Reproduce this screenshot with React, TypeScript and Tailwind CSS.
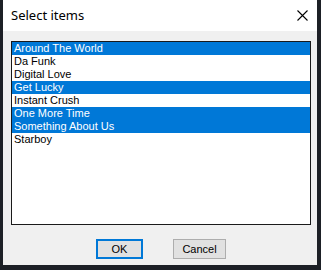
const items = [
  { name: "Around The World", selected: true },
  { name: "Da Funk", selected: false },
  { name: "Digital Love", selected: false },
  { name: "Get Lucky", selected: true },
  { name: "Instant Crush", selected: false },
  { name: "One More Time", selected: true },
  { name: "Something About Us", selected: true },
  { name: "Starboy", selected: false },
];

export default function App() {
  return (
    <div className="w-[321px] h-[270px] bg-[#1d2026] pl-[3px] overflow-hidden">
      <div className="w-[314px] h-[265px] flex flex-col bg-[#f0f0f0]">
        {/* Title bar */}
        <div className="h-[31px] bg-white flex items-center justify-between pl-[8px] pr-[9px]">
          <span className="text-[13px] text-black font-['Noto_Sans',sans-serif]">Select items</span>
          <svg width="11" height="11" viewBox="0 0 11 11" className="text-black">
            <path d="M0.5 0.5 L10.5 10.5 M10.5 0.5 L0.5 10.5" stroke="currentColor" strokeWidth="1.1" fill="none" />
          </svg>
        </div>

        {/* List */}
        <div className="pt-[10px] pl-[8px]">
          <div className="w-[300px] h-[184px] border border-[#1a1a1a] bg-white font-['Liberation_Sans',sans-serif] text-[11px]">
            {items.map((it) => (
              <div
                key={it.name}
                className={
                  it.selected
                    ? "h-[13px] leading-[13px] pl-[2px] bg-[#0078d7] text-white"
                    : "h-[13px] leading-[13px] pl-[2px] text-black"
                }
              >
                {it.name}
              </div>
            ))}
          </div>
        </div>

        {/* Buttons */}
        <div className="flex pl-[93px] pt-[14px] gap-[30px] font-['Liberation_Sans',sans-serif] text-[11px] text-black">
          <button className="w-[47px] h-[20px] bg-[#e1e1e1] border-2 border-[#0078d7]">OK</button>
          <button className="w-[53px] h-[20px] bg-[#e1e1e1] border border-[#adadad]">Cancel</button>
        </div>
      </div>
    </div>
  );
}
